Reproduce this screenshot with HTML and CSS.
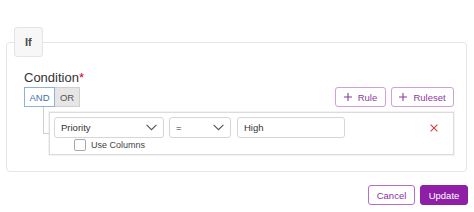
FILE: index.html
```html
<!DOCTYPE html>
<html lang="en">
  <head>
    <meta charset="UTF-8" />
    <title>Condition</title>
    <link rel="stylesheet" href="styles.css">
  </head>
  <body>
    <fieldset class="panel">
      <legend class="tab">If</legend>

      <div class="label">Condition<span class="req">*</span></div>

      <div class="group-head">
        <div class="toggle">
          <button class="toggle-btn on">AND</button>
          <button class="toggle-btn">OR</button>
        </div>
        <div class="actions">
          <button class="btn-add rule-btn">
            <svg width="8" height="8" viewBox="0 0 8 8"><path d="M4 0v8M0 4h8" stroke="currentColor" stroke-width="1.1" fill="none"/></svg>
            Rule
          </button>
          <button class="btn-add ruleset-btn">
            <svg width="8" height="8" viewBox="0 0 8 8"><path d="M4 0v8M0 4h8" stroke="currentColor" stroke-width="1.1" fill="none"/></svg>
            Ruleset
          </button>
        </div>
      </div>

      <div class="rules">
        <div class="rule">
          <div class="rule-row">
            <div class="select field">
              Priority
              <svg width="11" height="7" viewBox="0 0 11 7"><path d="M0.6 0.8l4.9 4.9 4.9-4.9" stroke="#555" stroke-width="1.1" fill="none"/></svg>
            </div>
            <div class="select op">
              =
              <svg width="11" height="7" viewBox="0 0 11 7"><path d="M0.6 0.8l4.9 4.9 4.9-4.9" stroke="#555" stroke-width="1.1" fill="none"/></svg>
            </div>
            <div class="input">High</div>
            <span class="remove">
              <svg width="8" height="8" viewBox="0 0 8 8"><path d="M0.6 0.6l6.8 6.8M7.4 0.6l-6.8 6.8" stroke="#d64541" stroke-width="1.2" fill="none"/></svg>
            </span>
          </div>
          <label class="use-cols"><span class="box"></span>Use Columns</label>
        </div>
      </div>
    </fieldset>

    <div class="footer">
      <button class="btn-cancel">Cancel</button>
      <button class="btn-update">Update</button>
    </div>
  </body>
</html>
```

FILE: styles.css
```css
body {
  margin: 0;
  padding-top: 27px;
  font-family: "Liberation Sans", Arial, sans-serif;
  color: #333;
  background: #fff;
}

button {
  font-family: inherit;
  cursor: pointer;
}

/* ========== Panel ========== */
.panel {
  margin: 0 7px 0 6px;
  border: 1px solid #e6e6e6;
  border-radius: 4px;
  padding: 13px 12px 16px 17px;
  min-width: 0;
}

.tab {
  margin-left: -10px;
  padding: 0 10px;
  height: 30px;
  box-sizing: border-box;
  line-height: 28px;
  font-size: 11px;
  font-weight: bold;
  color: #4a4a4a;
  background-color: #f7f7f8;
  border: 1px solid #e4e4e4;
  border-radius: 3px;
}

.label {
  font-size: 13px;
  line-height: 15px;
  margin-bottom: 2px;
  color: #333;
}

.req {
  color: #d0021b;
}

/* ========== Group header ========== */
.group-head {
  display: flex;
  justify-content: space-between;
  align-items: center;
}

.toggle {
  display: flex;
}

.toggle-btn {
  height: 20px;
  padding: 0;
  font-size: 9.5px;
  border: 1px solid #cfcfcf;
  background: #e6e6e6;
  color: #555;
  margin: 0;
}

.toggle-btn.on {
  width: 31px;
  background: #fff;
  color: #3f72b0;
  border-color: #8fb2da;
}

.toggle-btn:last-child {
  width: 25px;
  border-left: none;
}

.actions {
  display: flex;
  gap: 5px;
}

.btn-add {
  display: flex;
  align-items: center;
  justify-content: center;
  gap: 6px;
  height: 20px;
  padding: 0;
  font-size: 9.5px;
  color: #8b3aa0;
  background: #fff;
  border: 1px solid #cfa0dc;
  border-radius: 3px;
}

.rule-btn {
  width: 51px;
}

.ruleset-btn {
  width: 63px;
}

/* ========== Rules ========== */
.rules {
  position: relative;
  margin-left: 25px;
  margin-top: 5px;
}

.rules::before {
  content: " ";
  position: absolute;
  left: -6px;
  top: -5px;
  width: 5px;
  height: 26px;
  border-left: 1px solid #cfcfcf;
  border-bottom: 1px solid #cfcfcf;
}

.rule {
  border: 1px solid #dcdcdc;
  box-shadow: 0 0 0 1px #f3f3f3;
  background: #fff;
  padding: 4px 0 3px 4px;
}

.rule-row {
  display: flex;
  align-items: center;
}

.select,
.input {
  height: 21px;
  box-sizing: border-box;
  border: 1px solid #d6d6d6;
  border-radius: 3px;
  font-size: 9.5px;
  color: #333;
  display: flex;
  align-items: center;
  justify-content: space-between;
  padding: 0 6px;
}

.field {
  width: 110px;
}

.op {
  width: 62px;
  margin-left: 5px;
}

.input {
  width: 108px;
  margin-left: 6px;
}

.remove {
  margin-left: auto;
  margin-right: 15px;
  display: flex;
}

.use-cols {
  display: flex;
  align-items: center;
  gap: 5px;
  margin: 1px 0 0 20px;
  font-size: 9px;
  line-height: 12px;
  color: #444;
}

.box {
  width: 12px;
  height: 12px;
  box-sizing: border-box;
  border: 1px solid #aaa;
  border-radius: 2px;
  background: #fff;
}

/* ========== Footer ========== */
.footer {
  display: flex;
  justify-content: flex-end;
  gap: 5px;
  margin: 13px 6px 0 0;
}

.btn-cancel,
.btn-update {
  height: 20px;
  padding: 0;
  font-size: 9.5px;
  border-radius: 3px;
}

.btn-cancel {
  width: 47px;
  color: #8e2fa4;
  background: #fff;
  border: 1px solid #b66ec7;
}

.btn-update {
  width: 48px;
  color: #fff;
  background: #8e1fa6;
  border: 1px solid #8e1fa6;
}
```
